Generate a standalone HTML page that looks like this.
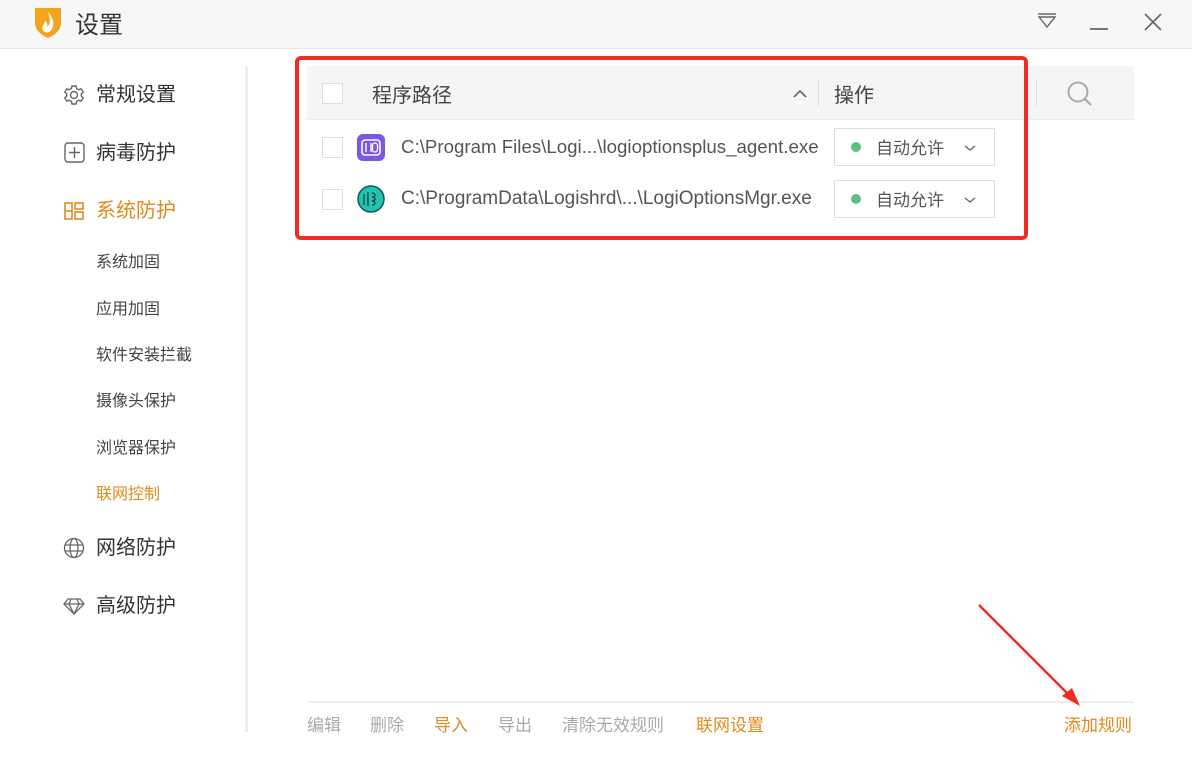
<!DOCTYPE html>
<html><head><meta charset="utf-8"><style>
*{margin:0;padding:0;box-sizing:border-box}
body{width:1192px;height:776px;background:#fff;position:relative;overflow:hidden;font-family:"Liberation Sans","Noto Sans CJK SC",sans-serif;color:#333}
.a{position:absolute;white-space:nowrap}
.tb{position:absolute;left:0;top:0;width:1192px;height:49px;background:#f7f7f7;border-bottom:1px solid #e8e8e8}
.m{font-size:20px;color:#333;line-height:24px}
.s{font-size:16px;color:#444;line-height:20px}
.cb{position:absolute;width:21px;height:21px;border:1px solid #ddd;background:#fff}
.sel{position:absolute;left:834px;width:161px;height:38px;border:1px solid #ddd;background:#fff;font-size:17px;color:#555}
.sel .d{position:absolute;left:16px;top:13px;width:10px;height:10px;border-radius:50%;background:#5ec07c}
.sel .t{position:absolute;left:41px;top:5px}
.bt{position:absolute;top:711px;font-size:17px;color:#aaa}
.or,.bt.or{color:#e08a1e}
</style></head><body>
<div class="tb"></div>
<svg class="a" style="left:33px;top:5px" width="30" height="34" viewBox="0 0 30 34"><path d="M2 3 L28 3 L28 18 C28 26 20 31 15 33 C10 31 2 26 2 18Z" fill="#f2a51c"/><path d="M15 7 C20 13 22 18 19 24 C17 28 12 29 10 25 C8 21 12 19 12 15 C14 18 15 20 14 22 C18 20 17 13 15 7Z" fill="#fff"/></svg>
<div class="a" style="left:75px;top:5px;font-size:24px;color:#333">设置</div>
<svg class="a" style="left:1036px;top:12px" width="22" height="18"><path d="M2 2H20M3 5L11 15L19 5Z" fill="none" stroke="#666" stroke-width="1.4"/></svg>
<div class="a" style="left:1090px;top:28px;width:18px;height:1.5px;background:#777"></div>
<svg class="a" style="left:1143px;top:12px" width="20" height="20"><path d="M2 2L18 18M18 2L2 18" stroke="#666" stroke-width="1.6"/></svg>

<div class="a" style="left:245px;top:66px;width:3px;height:666px;background:#eee"></div>

<svg class="a" style="left:63px;top:84px" width="22" height="22" viewBox="0 0 22 22"><circle cx="11" cy="11" r="3.5" fill="none" stroke="#666" stroke-width="1.4"/><path d="M9 2h4l.6 2.5 2.2 1.2 2.4-.9 2 3.4-1.9 1.7v2.2l1.9 1.7-2 3.4-2.4-.9-2.2 1.2L13 20H9l-.6-2.5-2.2-1.2-2.4.9-2-3.4 1.9-1.7V9.9L1.8 8.2l2-3.4 2.4.9L8.4 4.5Z" fill="none" stroke="#666" stroke-width="1.4"/></svg>
<div class="a m" style="left:96px;top:83px">常规设置</div>
<svg class="a" style="left:64px;top:142px" width="21" height="21"><rect x="1" y="1" width="19" height="19" rx="3" fill="none" stroke="#666" stroke-width="1.4"/><path d="M10.5 5v11M5 10.5h11" stroke="#666" stroke-width="1.4"/></svg>
<div class="a m" style="left:96px;top:141px">病毒防护</div>
<svg class="a" style="left:64px;top:201px" width="20" height="20"><rect x="1" y="2" width="7" height="16" fill="none" stroke="#e08a1e" stroke-width="1.6"/><path d="M1 10h7" stroke="#e08a1e" stroke-width="1.6"/><rect x="11" y="2" width="8" height="6" fill="none" stroke="#e08a1e" stroke-width="1.6"/><rect x="11" y="11" width="8" height="7" fill="none" stroke="#e08a1e" stroke-width="1.6"/></svg>
<div class="a m or" style="left:96px;top:199px">系统防护</div>
<div class="a s" style="left:96px;top:253px">系统加固</div>
<div class="a s" style="left:96px;top:300px">应用加固</div>
<div class="a s" style="left:96px;top:346px">软件安装拦截</div>
<div class="a s" style="left:96px;top:392px">摄像头保护</div>
<div class="a s" style="left:96px;top:439px">浏览器保护</div>
<div class="a s or" style="left:96px;top:485px">联网控制</div>
<svg class="a" style="left:63px;top:537px" width="22" height="22"><circle cx="11" cy="11" r="9.5" fill="none" stroke="#666" stroke-width="1.3"/><ellipse cx="11" cy="11" rx="4" ry="9.5" fill="none" stroke="#666" stroke-width="1.3"/><path d="M1.5 8h19M1.5 14h19" stroke="#666" stroke-width="1.3"/></svg>
<div class="a m" style="left:96px;top:536px">网络防护</div>
<svg class="a" style="left:63px;top:597px" width="22" height="18"><path d="M5 2h12l4 5-10 10L1 7Z M1 7h20 M8 2l-2 5 5 10 5-10-2-5" fill="none" stroke="#666" stroke-width="1.3"/></svg>
<div class="a m" style="left:96px;top:594px">高级防护</div>

<div class="a" style="left:307px;top:66px;width:827px;height:54px;background:#f5f5f5;border-bottom:1px solid #ebebeb"></div>
<div class="cb" style="left:322px;top:83px"></div>
<div class="a" style="left:372px;top:79px;font-size:20px;color:#444">程序路径</div>
<svg class="a" style="left:792px;top:88px" width="16" height="12"><path d="M2 9L8 3L14 9" fill="none" stroke="#555" stroke-width="1.5"/></svg>
<div class="a" style="left:818px;top:80px;width:1px;height:26px;background:#ddd"></div>
<div class="a" style="left:834px;top:79px;font-size:20px;color:#444">操作</div>
<div class="a" style="left:1036px;top:80px;width:1px;height:26px;background:#ddd"></div>
<svg class="a" style="left:1066px;top:80px" width="28" height="28"><circle cx="12" cy="12" r="9.5" fill="none" stroke="#aaa" stroke-width="2"/><path d="M19 19l6 6" stroke="#aaa" stroke-width="2.2"/></svg>

<div class="cb" style="left:322px;top:137px"></div>
<svg class="a" style="left:357px;top:134px" width="28" height="27"><rect width="28" height="27" rx="6" fill="#7b57e8"/><rect x="5" y="6" width="18" height="15" rx="3" fill="none" stroke="#fff" stroke-width="1.6"/><path d="M9 9v9M14 9v9" stroke="#fff" stroke-width="1.4"/><rect x="15.5" y="9" width="5" height="9" rx="2.5" fill="none" stroke="#fff" stroke-width="1.3"/></svg>
<div class="a" style="left:401px;top:136px;font-size:18.7px;color:#555">C:\Program Files\Logi...\logioptionsplus_agent.exe</div>
<div class="sel" style="top:128px"><span class="d"></span><span class="t">自动允许</span><svg style="position:absolute;left:128px;top:14px" width="14" height="10"><path d="M2 3l5 4 5-4" fill="none" stroke="#666" stroke-width="1.3"/></svg></div>

<div class="cb" style="left:322px;top:189px"></div>
<svg class="a" style="left:357px;top:185px" width="28" height="28"><circle cx="14" cy="14" r="13" fill="#23c3b3" stroke="#0d5a55" stroke-width="1.5"/><path d="M7 20V9M11 21V7M15 8c4 0 4 4 0 4 4 0 4 4 0 4 4 0 4 4 0 4" fill="none" stroke="#0d4a45" stroke-width="1.4"/></svg>
<div class="a" style="left:401px;top:188px;font-size:19px;color:#555">C:\ProgramData\Logishrd\...\LogiOptionsMgr.exe</div>
<div class="sel" style="top:180px"><span class="d"></span><span class="t">自动允许</span><svg style="position:absolute;left:128px;top:14px" width="14" height="10"><path d="M2 3l5 4 5-4" fill="none" stroke="#666" stroke-width="1.3"/></svg></div>

<div class="a" style="left:295px;top:56px;width:733px;height:184px;border:4px solid #f22b22;border-radius:6px"></div>

<div class="a" style="left:307px;top:701px;width:827px;height:2px;background:#eee"></div>
<div class="bt" style="left:307px">编辑</div>
<div class="bt" style="left:370px">删除</div>
<div class="bt or" style="left:434px">导入</div>
<div class="bt" style="left:498px">导出</div>
<div class="bt" style="left:562px">清除无效规则</div>
<div class="bt or" style="left:696px">联网设置</div>
<div class="bt or" style="left:1064px">添加规则</div>

<svg class="a" style="left:970px;top:600px" width="120" height="110"><path d="M9 5L103 99" stroke="#f22b22" stroke-width="2.5"/><path d="M110 106L92 96L102 88Z" fill="#f22b22"/></svg>
</body></html>
